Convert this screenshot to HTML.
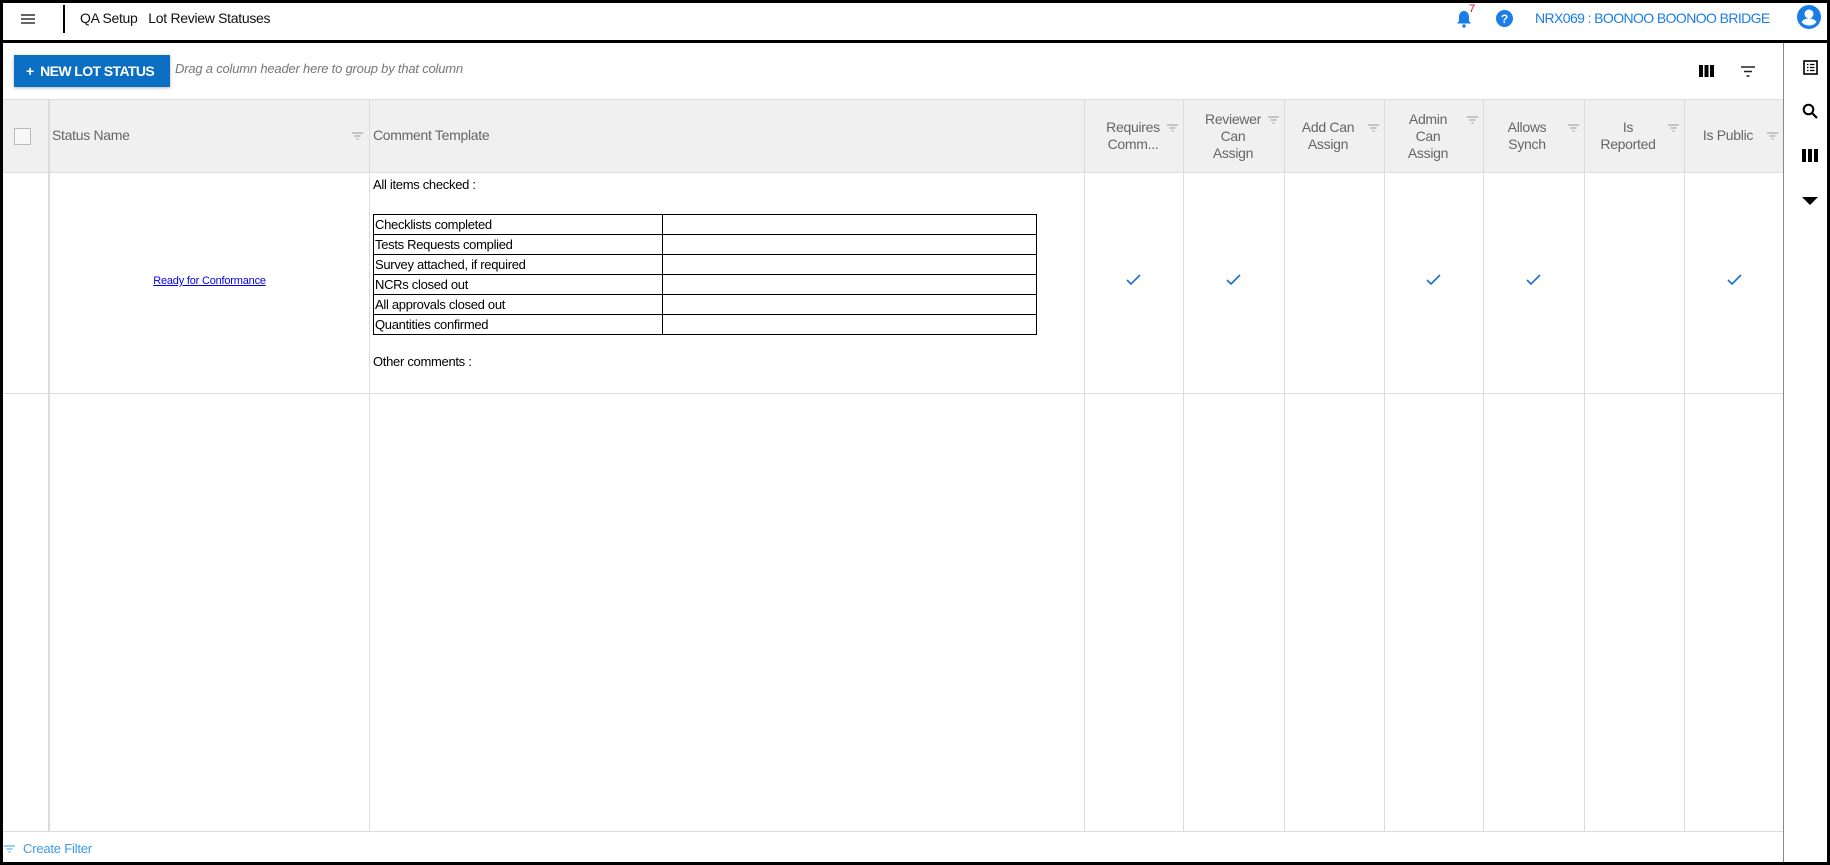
<!DOCTYPE html>
<html><head><meta charset="utf-8"><style>
*{box-sizing:border-box;margin:0;padding:0}
body{width:1830px;height:865px;position:relative;overflow:hidden;background:#fff;font-family:"Liberation Sans",sans-serif}
.a{position:absolute;white-space:nowrap}
.hd{color:#666;font-size:14px;line-height:17px;text-align:center;letter-spacing:-0.3px}
.vl{position:absolute;width:1px;background:#dcdcdc}
.fi{position:absolute;width:11px;height:8px}
.chk{position:absolute;top:274px}
td{border:1px solid #000;height:20px;font-size:13px;line-height:18px;padding:0 1px;color:#000;letter-spacing:-0.3px;white-space:nowrap}
</style></head><body>
<div class="a" style="left:0;top:0;width:1830px;height:865px;border:3px solid #000"></div>
<div class="a" style="left:0;top:40px;width:1830px;height:3px;background:#000"></div>
<svg class="a" style="left:21px;top:13px" width="14" height="12"><path d="M0 2h14M0 6h14M0 10h14" stroke="#333" stroke-width="1.6"/></svg>
<div class="a" style="left:63px;top:5px;width:2px;height:28px;background:#000"></div>
<div class="a" style="left:80px;top:10px;font-size:14px;color:#111;letter-spacing:-0.3px">QA Setup&nbsp;&nbsp; Lot Review Statuses</div>
<svg class="a" style="left:1456px;top:9px" width="16" height="20" viewBox="0 0 16 20"><path d="M8 2c3 0 5 2.5 5 6v4l2 2.5H1L3 12V8c0-3.5 2-6 5-6z" fill="#1a7de8"/><circle cx="8" cy="17" r="1.7" fill="#1a7de8"/></svg>
<div class="a" style="left:1469px;top:3px;font-size:11px;color:#e00">7</div>
<svg class="a" style="left:1496px;top:10px" width="17" height="17"><circle cx="8.5" cy="8.5" r="8.5" fill="#1a7de8"/><text x="8.5" y="13" text-anchor="middle" font-size="12" font-weight="bold" fill="#fff" font-family="Liberation Sans">?</text></svg>
<div class="a" style="left:1535px;top:10px;font-size:14px;color:#1a7de8;letter-spacing:-0.6px">NRX069 : BOONOO BOONOO BRIDGE</div>
<svg class="a" style="left:1797px;top:5px" width="24" height="24"><circle cx="12" cy="12" r="12" fill="#1a7de8"/><circle cx="12" cy="9" r="4.5" fill="#fff"/><path d="M4.5 17c2-3 4.5-3.5 7.5-3.5s5.5.5 7.5 3.5c-2 2.5-4.5 3.5-7.5 3.5s-5.5-1-7.5-3.5z" fill="#fff"/></svg>
<div class="a" style="left:1783px;top:43px;width:1px;height:819px;background:#888"></div>
<svg class="a" style="left:1803px;top:60px" width="15" height="15"><rect x="1" y="1" width="13" height="13" fill="none" stroke="#000" stroke-width="1.6"/><path d="M4 4.5h1.5M7 4.5h4.5M4 7.5h1.5M7 7.5h4.5M4 10.5h1.5M7 10.5h4.5" stroke="#000" stroke-width="1.3"/></svg>
<svg class="a" style="left:1802px;top:103px" width="16" height="16"><circle cx="6.5" cy="6.5" r="4.8" fill="none" stroke="#000" stroke-width="2"/><path d="M10 10l5 5" stroke="#000" stroke-width="2.2"/></svg>
<svg class="a" style="left:1802px;top:149px" width="16" height="13"><path d="M0 0h4v13H0zM6 0h4v13H6zM12 0h4v13h-4z" fill="#000"/></svg>
<svg class="a" style="left:1802px;top:197px" width="16" height="8"><path d="M0 0h16L8 8z" fill="#000"/></svg>
<div class="a" style="left:14px;top:55px;width:156px;height:32px;background:#0a6fc2;box-shadow:0 1px 3px rgba(0,0,0,.3);color:#fff;font-size:14px;font-weight:bold;line-height:32px;padding-left:12px;letter-spacing:-0.6px">+&nbsp;&nbsp;NEW LOT STATUS</div>
<div class="a" style="left:175px;top:61px;font-size:13px;font-style:italic;color:#777;letter-spacing:-0.2px">Drag a column header here to group by that column</div>
<svg class="a" style="left:1699px;top:65px" width="15" height="12"><path d="M0 0h4v12H0zM5.5 0h4v12h-4zM11 0h4v12h-4z" fill="#000"/></svg>
<svg class="a" style="left:1741px;top:66px" width="14" height="11"><path d="M0 1h14M3 5.5h8M5.5 10h3" stroke="#222" stroke-width="1.5"/></svg>
<div class="a" style="left:3px;top:99px;width:1780px;height:74px;background:#f0f0f0;border-top:1px solid #dcdcdc;border-bottom:1px solid #dcdcdc"></div>
<div class="a" style="left:14px;top:128px;width:17px;height:17px;border:1px solid #bbb;background:#f7f7f7"></div>
<div class="a hd" style="left:52px;top:127px">Status Name</div>
<div class="a hd" style="left:373px;top:127px">Comment Template</div>
<div class="vl" style="left:48px;top:99px;height:732px;width:2px"></div>
<div class="vl" style="left:369px;top:99px;height:732px"></div>
<div class="vl" style="left:1084px;top:99px;height:732px"></div>
<div class="vl" style="left:1183px;top:99px;height:732px"></div>
<div class="vl" style="left:1284px;top:99px;height:732px"></div>
<div class="vl" style="left:1384px;top:99px;height:732px"></div>
<div class="vl" style="left:1483px;top:99px;height:732px"></div>
<div class="vl" style="left:1584px;top:99px;height:732px"></div>
<div class="vl" style="left:1684px;top:99px;height:732px"></div>
<div class="a hd" style="left:1098px;top:119px;width:70px">Requires<br>Comm...</div>
<div class="a hd" style="left:1183px;top:111px;width:100px">Reviewer<br>Can<br>Assign</div>
<div class="a hd" style="left:1284px;top:119px;width:100px;padding-right:12px">Add Can<br>Assign</div>
<div class="a hd" style="left:1384px;top:111px;width:100px;padding-right:12px">Admin<br>Can<br>Assign</div>
<div class="a hd" style="left:1483px;top:119px;width:100px;padding-right:12px">Allows<br>Synch</div>
<div class="a hd" style="left:1584px;top:119px;width:100px;padding-right:12px">Is<br>Reported</div>
<div class="a hd" style="left:1684px;top:127px;width:100px;padding-right:12px">Is Public</div>
<svg class="fi" style="left:352px;top:132px"><path d="M0 1h11M2.5 4h6M4.5 7h2" stroke="#999"/></svg>
<svg class="fi" style="left:1167px;top:124px"><path d="M0 1h11M2.5 4h6M4.5 7h2" stroke="#999"/></svg>
<svg class="fi" style="left:1268px;top:116px"><path d="M0 1h11M2.5 4h6M4.5 7h2" stroke="#999"/></svg>
<svg class="fi" style="left:1368px;top:124px"><path d="M0 1h11M2.5 4h6M4.5 7h2" stroke="#999"/></svg>
<svg class="fi" style="left:1467px;top:116px"><path d="M0 1h11M2.5 4h6M4.5 7h2" stroke="#999"/></svg>
<svg class="fi" style="left:1568px;top:124px"><path d="M0 1h11M2.5 4h6M4.5 7h2" stroke="#999"/></svg>
<svg class="fi" style="left:1668px;top:124px"><path d="M0 1h11M2.5 4h6M4.5 7h2" stroke="#999"/></svg>
<svg class="fi" style="left:1767px;top:132px"><path d="M0 1h11M2.5 4h6M4.5 7h2" stroke="#999"/></svg>
<div class="a" style="left:3px;top:393px;width:1780px;height:1px;background:#dcdcdc"></div>
<div class="a" style="left:50px;top:275px;width:319px;text-align:center;font-size:11px;letter-spacing:-0.2px"><span style="color:#00e;text-decoration:underline">Ready for Conformance</span></div>
<div class="a" style="left:373px;top:177px;font-size:13px;color:#000;letter-spacing:-0.3px">All items checked :</div>
<table class="a" style="left:373px;top:214px;width:664px;border-collapse:collapse">
<tr><td style="width:289px">Checklists completed</td><td></td></tr>
<tr><td>Tests Requests complied</td><td></td></tr>
<tr><td>Survey attached, if required</td><td></td></tr>
<tr><td>NCRs closed out</td><td></td></tr>
<tr><td>All approvals closed out</td><td></td></tr>
<tr><td>Quantities confirmed</td><td></td></tr>
</table>
<div class="a" style="left:373px;top:354px;font-size:13px;color:#000;letter-spacing:-0.3px">Other comments :</div>
<svg class="chk" style="left:1126px" width="16" height="12"><path d="M1 6l4 4 9-9" fill="none" stroke="#1a6fd0" stroke-width="1.6"/></svg>
<svg class="chk" style="left:1226px" width="16" height="12"><path d="M1 6l4 4 9-9" fill="none" stroke="#1a6fd0" stroke-width="1.6"/></svg>
<svg class="chk" style="left:1426px" width="16" height="12"><path d="M1 6l4 4 9-9" fill="none" stroke="#1a6fd0" stroke-width="1.6"/></svg>
<svg class="chk" style="left:1526px" width="16" height="12"><path d="M1 6l4 4 9-9" fill="none" stroke="#1a6fd0" stroke-width="1.6"/></svg>
<svg class="chk" style="left:1727px" width="16" height="12"><path d="M1 6l4 4 9-9" fill="none" stroke="#1a6fd0" stroke-width="1.6"/></svg>
<div class="a" style="left:3px;top:831px;width:1780px;height:1px;background:#dcdcdc"></div>
<svg class="a" style="left:4px;top:845px" width="11" height="8"><path d="M0 1h11M2.5 4h6M4.5 7h2" stroke="#3a9be8"/></svg>
<div class="a" style="left:23px;top:841px;font-size:13px;color:#3a9be8;letter-spacing:-0.2px">Create Filter</div>
</body></html>
